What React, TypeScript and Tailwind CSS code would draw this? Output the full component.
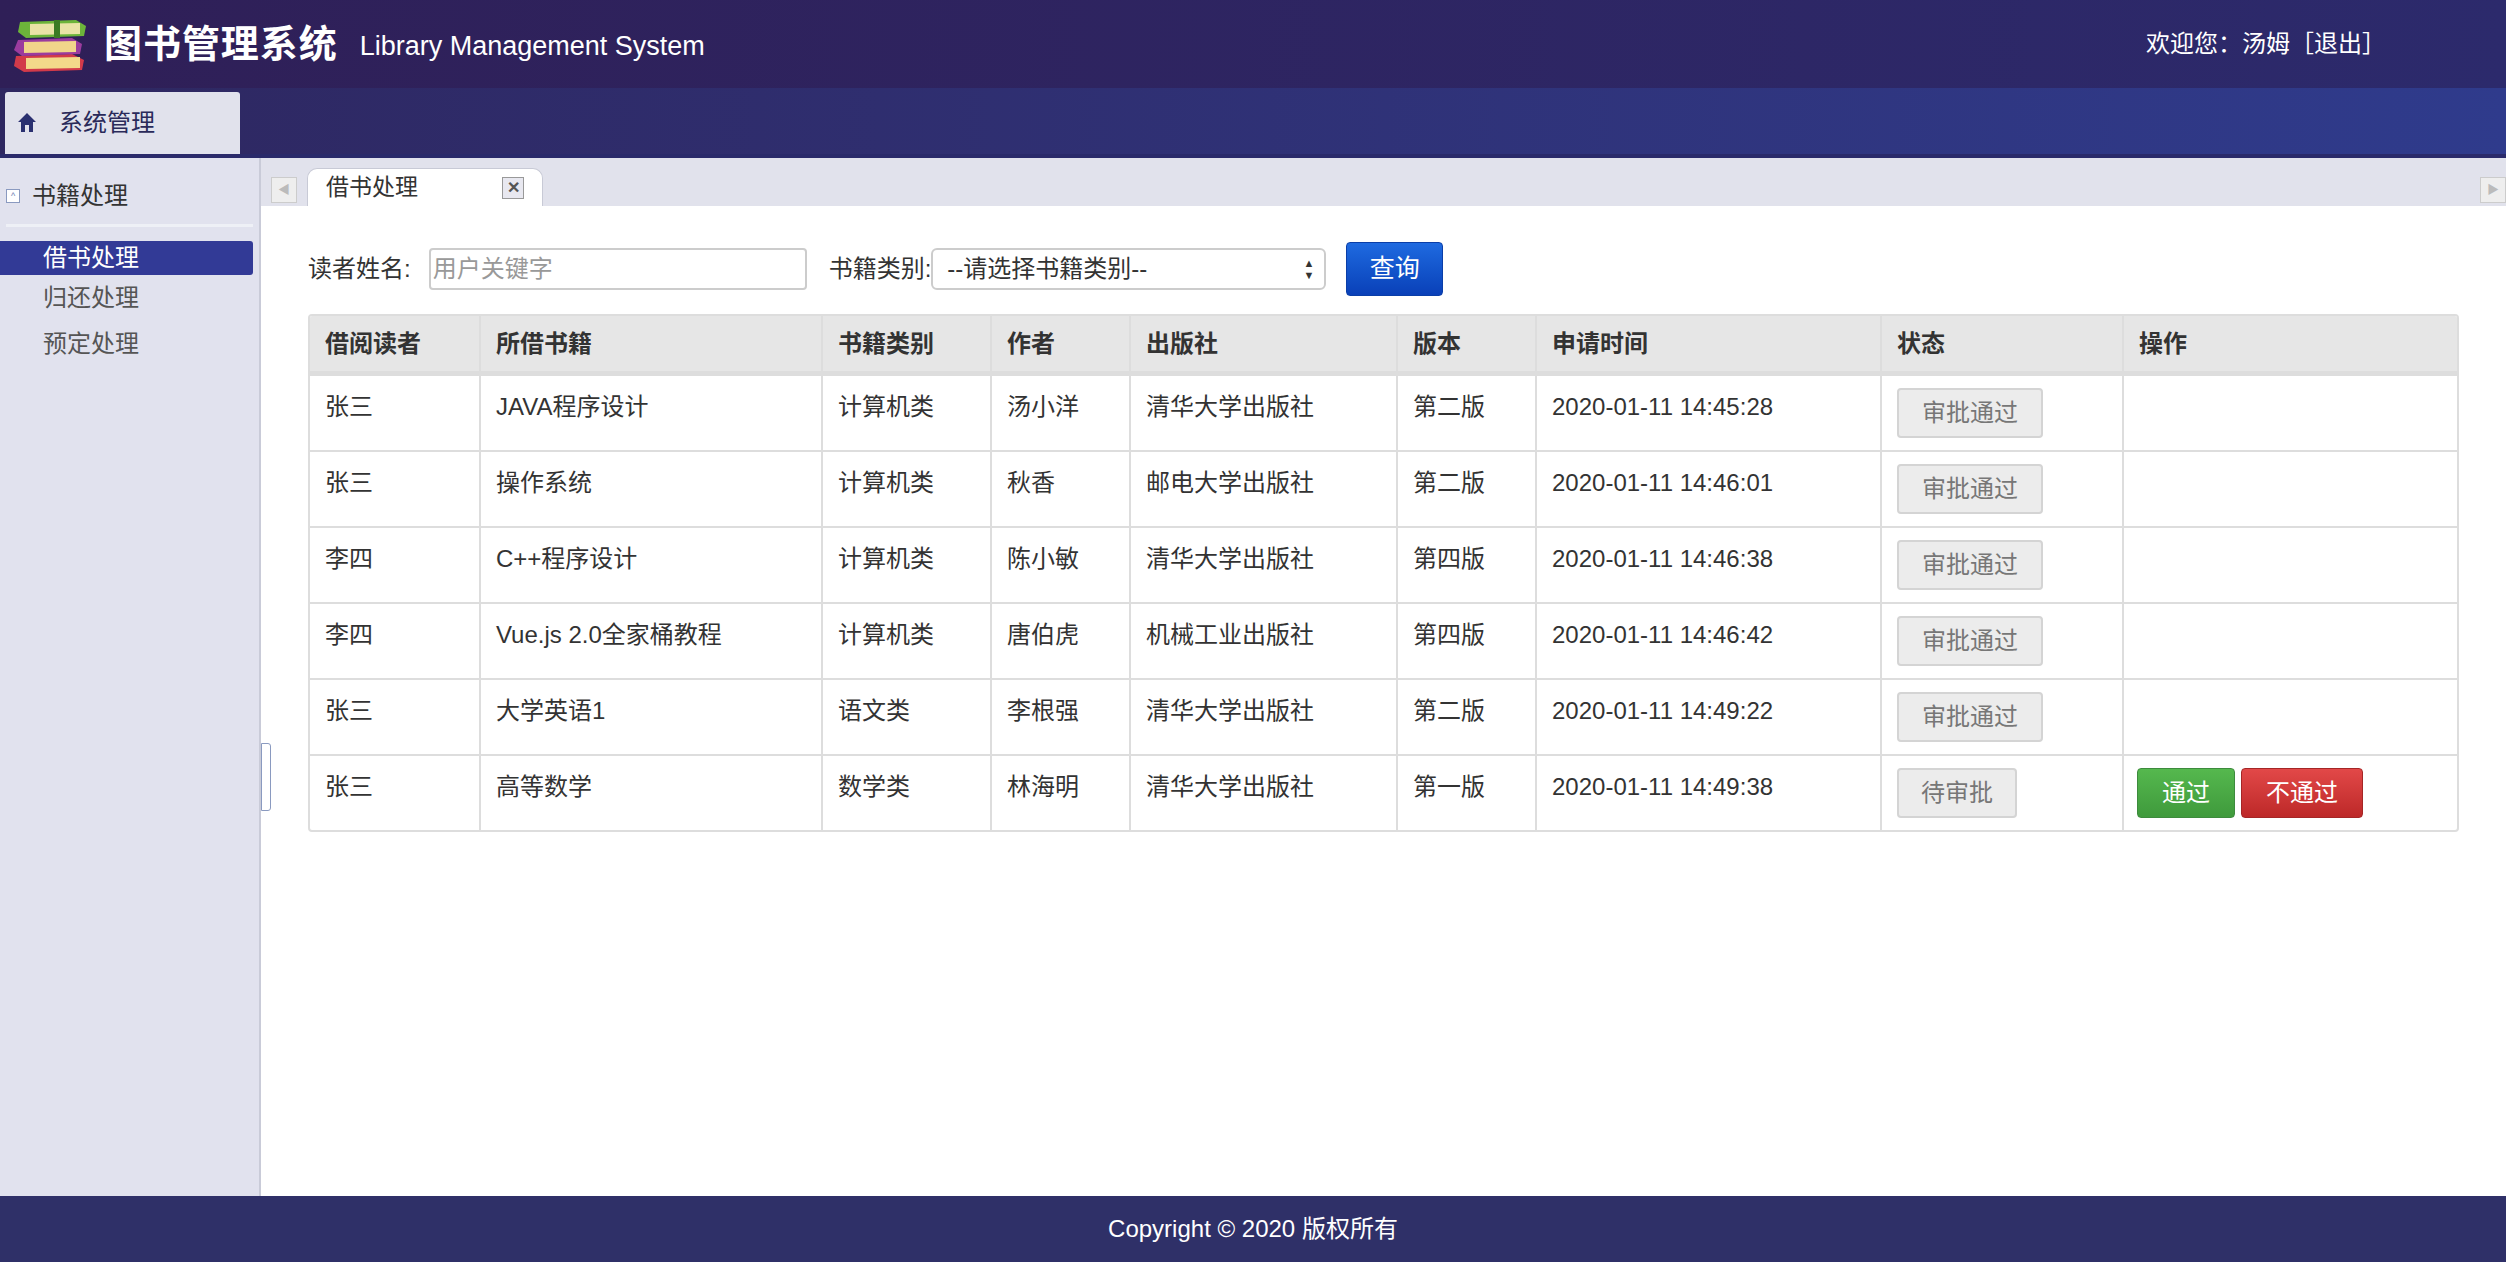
const rows = [
  ['张三', 'JAVA程序设计', '计算机类', '汤小洋', '清华大学出版社', '第二版', '2020-01-11 14:45:28', '审批通过'],
  ['张三', '操作系统', '计算机类', '秋香', '邮电大学出版社', '第二版', '2020-01-11 14:46:01', '审批通过'],
  ['李四', 'C++程序设计', '计算机类', '陈小敏', '清华大学出版社', '第四版', '2020-01-11 14:46:38', '审批通过'],
  ['李四', 'Vue.js 2.0全家桶教程', '计算机类', '唐伯虎', '机械工业出版社', '第四版', '2020-01-11 14:46:42', '审批通过'],
  ['张三', '大学英语1', '语文类', '李根强', '清华大学出版社', '第二版', '2020-01-11 14:49:22', '审批通过'],
  ['张三', '高等数学', '数学类', '林海明', '清华大学出版社', '第一版', '2020-01-11 14:49:38', '待审批'],
];

const widths = ['w-[169px]', 'w-[342px]', 'w-[169px]', 'w-[139px]', 'w-[267px]', 'w-[139px]', 'w-[345px]', 'w-[242px]', 'flex-1'];
const heads = ['借阅读者', '所借书籍', '书籍类别', '作者', '出版社', '版本', '申请时间', '状态', '操作'];

const Logo = () => (
  <svg width="80" height="56" viewBox="0 0 80 56">
    <path d="M6 40 L62 38 L74 44 L72 54 L14 56 L4 50 Z" fill="#d23a4a" />
    <path d="M16 42 L70 41 L70 52 L16 53 Z" fill="#f3d98a" />
    <path d="M8 24 L62 22 L72 28 L70 38 L12 40 L4 34 Z" fill="#9b3c9e" />
    <path d="M14 26 L66 25 L66 36 L14 37 Z" fill="#f1d58a" />
    <path d="M10 6 L66 4 L76 10 L74 20 L16 22 L8 16 Z" fill="#6cb43a" />
    <path d="M20 8 L70 7 L70 18 L20 19 Z" fill="#e9e3a6" />
    <rect x="44" y="4" width="6" height="18" fill="#3b7a23" />
  </svg>
);

export default function App() {
  return (
    <div className="flex h-screen flex-col overflow-hidden font-['Liberation_Sans','Noto_Sans_CJK_SC',sans-serif]">
      <div className="flex h-[88px] items-center bg-gradient-to-r from-[#2f1f57] to-[#2c2a6c] px-[10px]">
        <Logo />
        <span className="ml-[14px] text-[38px] font-bold tracking-wide text-white">图书管理系统</span>
        <span className="ml-[22px] mt-[4px] text-[27px] text-white">Library Management System</span>
        <span className="ml-auto mr-[110px] text-[24px] text-white">欢迎您：汤姆［退出］</span>
      </div>
      <div className="flex h-[70px] items-end border-b-[4px] border-[#2a2a6a] bg-gradient-to-r from-[#2e2760] to-[#2f3b8c] pl-[5px]">
        <div className="flex h-[62px] w-[235px] items-center gap-[22px] rounded-t-[3px] bg-[#e1e2ec] pl-[12px]">
          <svg width="20" height="22" viewBox="0 0 20 22">
            <path d="M10 1 L19 10 L16 10 L16 20 L4 20 L4 10 L1 10 Z" fill="#2a3070" />
            <rect x="8" y="13" width="4" height="7" fill="#e1e2ec" />
          </svg>
          <span className="text-[24px] text-[#2a2a5a]">系统管理</span>
        </div>
      </div>
      <div className="flex flex-1">
        <div className="relative w-[261px] border-r-[2px] border-[#c9cbd8] bg-[#e1e2ee]">
          <div className="mx-[6px] mt-[20px] flex items-center gap-[12px] border-b-[3px] border-[#eef0f6] pb-[10px]">
            <span className="flex h-[14px] w-[14px] items-center justify-center border border-[#8a9ac0] bg-white text-[9px] leading-none text-[#6a7ab0]">^</span>
            <span className="text-[24px] text-[#333]">书籍处理</span>
          </div>
          <div className="mt-[14px] flex flex-col">
            <div className="mr-[6px] flex h-[34px] items-center rounded-r-[3px] bg-[#323a96] pl-[43px] text-[24px] text-white">借书处理</div>
            <div className="flex h-[46px] items-center pl-[43px] text-[24px] text-[#555]">归还处理</div>
            <div className="flex h-[46px] items-center pl-[43px] text-[24px] text-[#555]">预定处理</div>
          </div>
          <div className="absolute right-[-12px] top-[585px] h-[68px] w-[10px] rounded-r-[3px] border border-[#8a9ac0] bg-white" />
        </div>
        <div className="flex flex-1 flex-col">
          <div className="flex h-[48px] items-end bg-[#e1e2ec]">
            <div className="mb-[3px] ml-[10px] flex h-[26px] w-[26px] items-center justify-center border border-[#ccc] bg-[#eee] text-[12px] text-[#bbb]">◀</div>
            <div className="ml-[10px] flex h-[38px] w-[236px] items-center justify-between rounded-t-[10px] border border-b-0 border-[#c8cad6] bg-white px-[18px]">
              <span className="text-[23px] text-[#333]">借书处理</span>
              <span className="flex h-[22px] w-[22px] items-center justify-center border border-[#999] bg-[#e8e8f0] text-[16px] font-bold leading-none text-[#555]">✕</span>
            </div>
            <div className="mb-[3px] ml-auto flex h-[26px] w-[26px] items-center justify-center border border-[#ccc] bg-[#eee] text-[12px] text-[#bbb]">▶</div>
          </div>
          <div className="flex-1 bg-white px-[47px] pt-[36px]">
            <div className="flex items-center text-[24px] text-[#333]">
              <span>读者姓名:</span>
              <div className="ml-[18px] flex h-[42px] w-[378px] items-center rounded-[4px] border-[2px] border-[#ccc] px-[2px] text-[#999]">用户关键字</div>
              <span className="ml-[22px]">书籍类别:</span>
              <div className="flex h-[42px] w-[395px] items-center justify-between rounded-[6px] border-[2px] border-[#ccc] pl-[14px] pr-[10px]">
                <span>--请选择书籍类别--</span>
                <span className="flex flex-col text-[11px] leading-[12px]"><span>▲</span><span>▼</span></span>
              </div>
              <div className="ml-[20px] flex h-[54px] w-[97px] items-center justify-center rounded-[4px] border border-[#0a3ea8] bg-gradient-to-b from-[#1f6ae0] to-[#0a40b8] text-[25px] text-white">查询</div>
            </div>
            <div className="mt-[18px] overflow-hidden rounded-[4px] border-[2px] border-[#ddd] text-[24px] text-[#333]">
              <div className="flex h-[58px] border-b-[3px] border-[#ddd] bg-[#e6e6e6] font-bold">
                {heads.map((h, i) => (
                  <div key={h} className={`${widths[i]} flex items-center border-l-[2px] border-[#ddd] px-[15px] first:border-l-0`}>{h}</div>
                ))}
              </div>
              {rows.map((r, ri) => (
                <div key={ri} className="flex h-[76px] border-t-[2px] border-[#ddd] first:border-t-0">
                  {r.slice(0, 7).map((c, i) => (
                    <div key={i} className={`${widths[i]} border-l-[2px] border-[#ddd] px-[15px] pt-[14px] leading-[34px] first:border-l-0`}>{c}</div>
                  ))}
                  <div className={`${widths[7]} border-l-[2px] border-[#ddd] px-[15px] pt-[12px]`}>
                    <div className={`${r[7] === '待审批' ? 'w-[120px]' : 'w-[146px]'} flex h-[50px] items-center justify-center rounded-[4px] border-[2px] border-[#d4d4d4] bg-[#ececec] text-[#777]`}>{r[7]}</div>
                  </div>
                  <div className="flex flex-1 gap-[6px] border-l-[2px] border-[#ddd] px-[13px] pt-[12px]">
                    {r[7] === '待审批' && (
                      <>
                        <div className="flex h-[50px] w-[98px] items-center justify-center rounded-[4px] border border-[#3d8b3d] bg-gradient-to-b from-[#55b84e] to-[#3f9a3c] text-white">通过</div>
                        <div className="flex h-[50px] w-[122px] items-center justify-center rounded-[4px] border border-[#a52626] bg-gradient-to-b from-[#e24848] to-[#bd2828] text-white">不通过</div>
                      </>
                    )}
                  </div>
                </div>
              ))}
            </div>
          </div>
        </div>
      </div>
      <div className="flex h-[66px] items-center justify-center bg-[#2f3068] text-[24px] text-white">Copyright © 2020 版权所有</div>
    </div>
  );
}
